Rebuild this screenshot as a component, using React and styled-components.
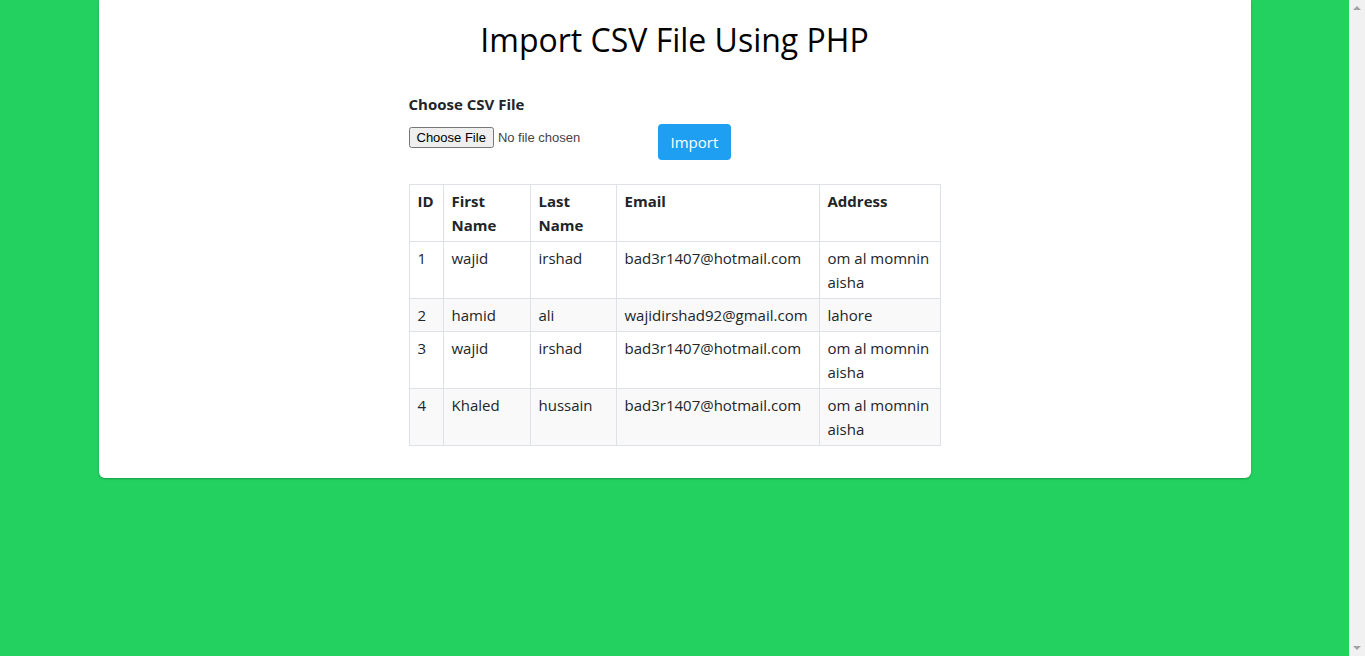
import React from "react";
import styled, { createGlobalStyle } from "styled-components";

const GlobalStyle = createGlobalStyle`
  body {
    margin: 0;
    overflow: hidden;
    font-family: "Open Sans", "Noto Sans", sans-serif;
    font-size: 15px;
    line-height: 24px;
    color: #212529;
  }
`;

const Page = styled.div`
  display: flex;
  height: 100vh;
`;

const Main = styled.main`
  flex: 1;
  background: #23d160;
`;

// stand-in for the browser's empty vertical scrollbar track
const ScrollTrack = styled.div`
  width: 16px;
  background: #f1f1f1;
  display: flex;
  flex-direction: column;
  justify-content: space-between;
  align-items: center;
  padding: 6px 0;
  box-sizing: border-box;
`;

const Arrow = styled.span`
  width: 0;
  height: 0;
  border-left: 4px solid transparent;
  border-right: 4px solid transparent;
  ${(p) =>
    p.$down ? "border-top: 4px solid #a3a3a3;" : "border-bottom: 4px solid #a3a3a3;"}
`;

const Card = styled.div`
  width: 1152px;
  margin: 0 auto;
  background: #fff;
  border-radius: 0 0 6px 6px;
  box-shadow: 0 1px 2px rgba(0, 0, 0, 0.25);
  padding: 18px 0 32px;
  box-sizing: border-box;
`;

const Title = styled.h1`
  margin: 0 0 30px;
  text-align: center;
  font-size: 32px;
  line-height: 44px;
  font-weight: 500;
  color: #000;
`;

const Panel = styled.div`
  width: 532px;
  margin: 0 auto;
`;

const Label = styled.label`
  display: block;
  font-weight: 700;
  margin-bottom: 8px;
`;

const UploadRow = styled.form`
  display: flex;
  align-items: flex-start;
  margin-bottom: 24px;
`;

const FileInput = styled.input`
  width: 249px;
  margin: 3px 0 0;
  font-family: "Liberation Sans", Arial, sans-serif;
  font-size: 13px;
  color: #444;
`;

const ImportButton = styled.button`
  height: 36px;
  padding: 0 13px;
  border: none;
  border-radius: 4px;
  background: #1f9ff1;
  color: #fff;
  font-family: inherit;
  font-size: 15px;
  cursor: pointer;
`;

const Table = styled.table`
  width: 531px;
  border-collapse: collapse;
  table-layout: fixed;
`;

const Th = styled.th`
  border: 1px solid #dee2e6;
  padding: 4px 8px;
  text-align: left;
  vertical-align: top;
  font-weight: 700;
`;

const Td = styled.td`
  border: 1px solid #dee2e6;
  padding: 4px 8px;
  vertical-align: top;
`;

const Row = styled.tr`
  background: ${(p) => (p.$striped ? "#f9f9f9" : "#fff")};
`;

const columns = [
  { label: "ID", width: 34 },
  { label: "First Name", width: 87 },
  { label: "Last Name", width: 86 },
  { label: "Email", width: 203 },
  { label: "Address", width: 121 },
];

const users = [
  { id: 1, first: "wajid", last: "irshad", email: "bad3r1407@hotmail.com", address: "om al momnin aisha" },
  { id: 2, first: "hamid", last: "ali", email: "wajidirshad92@gmail.com", address: "lahore" },
  { id: 3, first: "wajid", last: "irshad", email: "bad3r1407@hotmail.com", address: "om al momnin aisha" },
  { id: 4, first: "Khaled", last: "hussain", email: "bad3r1407@hotmail.com", address: "om al momnin aisha" },
];

export default function App() {
  return (
    <>
      <GlobalStyle />
      <Page>
        <Main>
          <Card>
            <Title>Import CSV File Using PHP</Title>
            <Panel>
              <Label htmlFor="csv">Choose CSV File</Label>
              <UploadRow onSubmit={(e) => e.preventDefault()}>
                <FileInput id="csv" type="file" accept=".csv" />
                <ImportButton type="submit">Import</ImportButton>
              </UploadRow>
              <Table>
                <colgroup>
                  {columns.map((c) => (
                    <col key={c.label} style={{ width: c.width }} />
                  ))}
                </colgroup>
                <thead>
                  <tr>
                    {columns.map((c) => (
                      <Th key={c.label}>{c.label}</Th>
                    ))}
                  </tr>
                </thead>
                <tbody>
                  {users.map((u, i) => (
                    <Row key={u.id} $striped={i % 2 === 1}>
                      <Td>{u.id}</Td>
                      <Td>{u.first}</Td>
                      <Td>{u.last}</Td>
                      <Td>{u.email}</Td>
                      <Td>{u.address}</Td>
                    </Row>
                  ))}
                </tbody>
              </Table>
            </Panel>
          </Card>
        </Main>
        <ScrollTrack>
          <Arrow />
          <Arrow $down />
        </ScrollTrack>
      </Page>
    </>
  );
}
